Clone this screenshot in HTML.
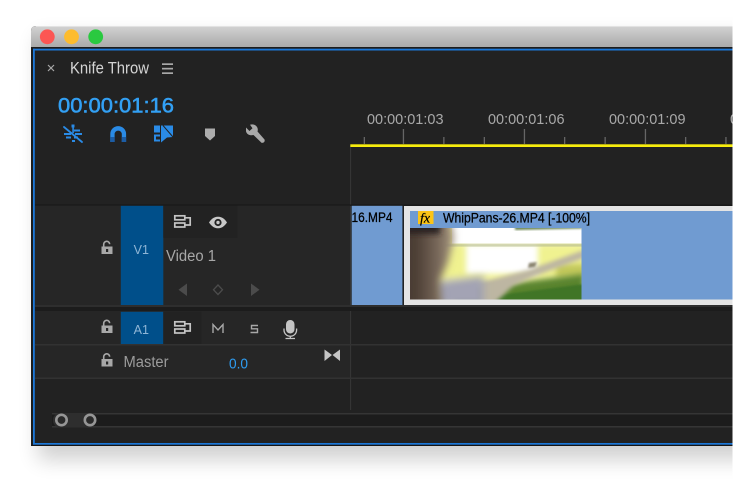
<!DOCTYPE html>
<html><head><meta charset="utf-8"><style>
html,body{margin:0;padding:0;width:755px;height:482px;overflow:hidden;background:#fff}
svg{display:block;position:absolute;left:0;top:0}
text{font-family:"Liberation Sans",sans-serif}
</style></head><body>
<svg width="755" height="482" viewBox="0 0 755 482" xmlns="http://www.w3.org/2000/svg">
<defs>
<linearGradient id="tb" x1="0" y1="0" x2="0" y2="1"><stop offset="0" stop-color="#d2d2d2"/><stop offset="1" stop-color="#a8a8a8"/></linearGradient>
<filter id="sh" x="-15%" y="-15%" width="130%" height="135%"><feGaussianBlur stdDeviation="10"/></filter>
<filter id="b1" x="-20%" y="-20%" width="140%" height="140%"><feGaussianBlur stdDeviation="1.100"/></filter>
<filter id="b2" x="-20%" y="-20%" width="140%" height="140%"><feGaussianBlur stdDeviation="2"/></filter>
<filter id="b3" x="-30%" y="-30%" width="160%" height="160%"><feGaussianBlur stdDeviation="3"/></filter>
<filter id="b5" x="-40%" y="-40%" width="180%" height="180%"><feGaussianBlur stdDeviation="4"/></filter>
<filter id="soft" x="0" y="0" width="100%" height="100%"><feGaussianBlur stdDeviation="0.38"/></filter>
<clipPath id="th"><rect x="410" y="228" width="171.500" height="71.500"/></clipPath>
<clipPath id="win"><rect x="0" y="0" width="732.500" height="482"/></clipPath>
<linearGradient id="face" x1="0" y1="0" x2="1" y2="0"><stop offset="0" stop-color="#3a2f27"/><stop offset=".5" stop-color="#4e4036"/><stop offset=".8" stop-color="#7a6a5c"/><stop offset="1" stop-color="#a89880"/></linearGradient>
<g id="tog" fill="none" stroke="#c4c4c4" stroke-width="1.700"><rect x="0.800" y="0.800" width="10" height="4"/><rect x="0.800" y="8" width="10" height="4"/><path d="M10.800 2.800H16.200V10H10.800"/></g>
<g id="lk"><path d="M2.200 6V3.500a3 3 0 0 1 6-.3" fill="none" stroke="#a8a8a8" stroke-width="1.600"/><path d="M0 5.500H11V13H0Z" fill="#a8a8a8"/><rect x="4.500" y="8" width="2.200" height="3" fill="#262626"/></g>
</defs>
<g clip-path="url(#win)">
<rect x="38" y="36" width="720" height="424" fill="#000" opacity=".18" filter="url(#sh)"/>
</g>
<rect x="733" y="0" width="22" height="482" fill="#fff"/>
<g filter="url(#soft)">
<path d="M31 446V31q0-5 5-5H734V446z" fill="#222"/>
<path d="M31 48V31q0-5 5-5H734V48z" fill="url(#tb)"/>
<rect x="36" y="26" width="698" height="1" fill="#e2e2e2"/>
<rect x="31" y="47" width="703" height="1.500" fill="#1c1c1c"/>
<circle cx="47.300" cy="36.800" r="7.400" fill="#fc5753"/>
<circle cx="71.500" cy="36.800" r="7.400" fill="#fdbc2e"/>
<circle cx="95.700" cy="36.800" r="7.400" fill="#29c940"/>

<rect x="31" y="48" width="2" height="398" fill="#1d1d1d"/>
<rect x="33" y="48.700" width="701" height="1.800" fill="#1f78d8"/>
<rect x="33" y="48.700" width="1.800" height="396" fill="#1f78d8"/>
<rect x="33" y="443" width="701" height="1.800" fill="#1f78d8"/>
<rect x="32" y="444.800" width="702" height="1.200" fill="#181818"/>

<!-- header -->
<g stroke="#a8a8a8" stroke-width="1.200"><path d="M48 65L54 71M54 65L48 71"/></g>
<text x="70" y="73.500" font-size="16.500" fill="#d4d4d4" textLength="79" lengthAdjust="spacingAndGlyphs">Knife Throw</text>
<g fill="#a8a8a8"><rect x="162" y="63.300" width="11" height="1.700"/><rect x="162" y="67.800" width="11" height="1.700"/><rect x="162" y="72.300" width="11" height="1.700"/></g>
<text x="58" y="112.500" font-size="21.500" fill="#33a0f4" stroke="#33a0f4" stroke-width=".55" textLength="116" lengthAdjust="spacingAndGlyphs">00:00:01:16</text>

<!-- toolbar icons -->
<g fill="#2b8be6" stroke="none">
<g stroke="#2b8be6" stroke-width="1.800" fill="none" stroke-linecap="round"><path d="M64 127L82 142"/></g>
<rect x="71.500" y="124.500" width="3" height="3"/><rect x="72.300" y="127" width="1.600" height="6"/>
<rect x="74" y="129.500" width="6" height="2"/><rect x="64" y="133" width="7" height="2"/><rect x="75" y="133" width="7" height="2"/>
<rect x="66" y="136.500" width="5" height="2"/><rect x="74" y="136.500" width="4" height="2"/><rect x="72" y="140" width="3" height="2"/>
<path d="M110.300 142V134a7.900 7.900 0 0 1 15.800 0V142H121.800V134.200a3.600 3.600 0 0 0-7.200 0V142Z"/>
<path d="M110.300 137H114.600V142H110.300ZM121.800 137H126.100V142H121.800Z" fill="#1a5da6"/>
<rect x="154" y="125.500" width="6" height="7"/><path d="M154 134.500h6v2h-4v3h4v2h-6z"/>
<path d="M161 125.500L173 125.500V137L167 137.500L161 142.500Z"/>
<path d="M163 125.500L173 137" stroke="#222" stroke-width="1" fill="none"/>
</g>
<path d="M205 128.500H215V136L210 140.500L205 136Z" fill="#adadad"/>
<path d="M246 127.500L249.500 131L252.500 128.300L250 124.800C253 123.700 256.300 125 257.500 128C258 129.500 257.800 130.500 257.500 131.500L264.500 139.500C265.300 141.700 263.500 143.300 261.500 142.800L253.500 135C250 135.800 246.800 134.500 246 131.200Z" fill="#a9a9a9"/>

<!-- ruler -->
<g font-size="15" fill="#a8a8a8">
<text x="367" y="124" textLength="76.500" lengthAdjust="spacingAndGlyphs">00:00:01:03</text>
<text x="488" y="124" textLength="76.500" lengthAdjust="spacingAndGlyphs">00:00:01:06</text>
<text x="609" y="124" textLength="76.500" lengthAdjust="spacingAndGlyphs">00:00:01:09</text>
<text x="730" y="124" textLength="76.500" lengthAdjust="spacingAndGlyphs">00:00:01:12</text>
</g>
<g fill="#666">
<rect x="402.800" y="129" width="1.300" height="15"/><rect x="523.800" y="129" width="1.300" height="15"/><rect x="644.800" y="129" width="1.300" height="15"/>
<rect x="363.700" y="137" width="1.300" height="7"/><rect x="443.200" y="137" width="1.300" height="7"/><rect x="483.700" y="137" width="1.300" height="7"/><rect x="564" y="137" width="1.300" height="7"/><rect x="604.500" y="137" width="1.300" height="7"/><rect x="685" y="137" width="1.300" height="7"/><rect x="725.300" y="137" width="1.300" height="7"/>
</g>
<rect x="350.300" y="144.300" width="384" height="2.700" fill="#f6ec10"/>

<!-- dividers -->
<rect x="350" y="147" width="1.200" height="263" fill="#343434"/>
<rect x="35" y="204.500" width="699" height="1.300" fill="#191919"/>
<rect x="35" y="205.500" width="315" height="100" fill="#262626"/>
<rect x="35" y="305" width="699" height="2" fill="#2e2e2e"/>
<rect x="35" y="307" width="699" height="4" fill="#1e1e1e"/>
<rect x="35" y="311" width="315" height="33" fill="#262626"/>
<rect x="35" y="344" width="699" height="1.500" fill="#323232"/>
<rect x="35" y="345.500" width="315" height="32" fill="#262626"/>
<rect x="35" y="377.500" width="699" height="1.500" fill="#323232"/>

<!-- V1 -->
<rect x="120.800" y="205.800" width="42.500" height="99.200" fill="#04508a"/>
<text x="141.300" y="254" font-size="12.500" fill="#8fb6d6" text-anchor="middle">V1</text>
<rect x="163.300" y="205.800" width="74" height="32" fill="#222"/>
<text x="166" y="261" font-size="15.500" fill="#a8a8a8" textLength="50" lengthAdjust="spacingAndGlyphs">Video 1</text>
<path d="M187 283.500V296L178.500 289.700Z" fill="#4c4c4c"/>
<path d="M251 283.500V296L259.500 289.700Z" fill="#4c4c4c"/>
<path d="M218 285L222.500 289.700L218 294.500L213.500 289.700Z" fill="none" stroke="#4c4c4c" stroke-width="1.300"/>

<!-- A1 -->
<rect x="120.800" y="311.800" width="42.500" height="32.200" fill="#04508a"/>
<text x="141.300" y="334" font-size="12.500" fill="#8fb6d6" text-anchor="middle">A1</text>
<rect x="163.300" y="311.800" width="38" height="32.200" fill="#212121"/>

<!-- track icons -->
<use href="#tog" x="174" y="215"/>
<use href="#tog" x="174" y="321"/>
<path d="M209 222.500C212 218 215 216.800 218 216.800C221 216.800 224 218 227 222.500C224 227 221 228.300 218 228.300C215 228.300 212 227 209 222.500Z" fill="#c8c8c8"/>
<circle cx="218" cy="222.500" r="3.600" fill="#222"/><circle cx="218" cy="222.500" r="1.700" fill="#c8c8c8"/>
<use href="#lk" x="101.500" y="241"/>
<use href="#lk" x="101.500" y="320"/>
<use href="#lk" x="101.500" y="353.500"/>
<path d="M213 333V324.500L218 330L223 324.500V333" fill="none" stroke="#a8a8a8" stroke-width="1.400"/>
<path d="M258 325.500H251.500V328.800H257.500V332.500H250.500" fill="none" stroke="#a8a8a8" stroke-width="1.400"/>
<rect x="286" y="320" width="8.500" height="13.500" rx="4.200" fill="#c4c4c4"/>
<path d="M284 328.500V330a6.300 6.300 0 0 0 12.600 0V328.500M290.300 336V338.500M285.500 338.500H295" fill="none" stroke="#c4c4c4" stroke-width="1.300"/>
<text x="123.500" y="367" font-size="15.500" fill="#9c9c9c" textLength="45" lengthAdjust="spacingAndGlyphs">Master</text>
<text x="229" y="368.500" font-size="15" fill="#2e9cf0" textLength="19" lengthAdjust="spacingAndGlyphs">0.0</text>
<path d="M324.500 349.500L332 355L324.500 361ZM340 349.500L332.500 355L340 361Z" fill="#c4c4c4"/>

<!-- clips -->
<rect x="351.700" y="205.800" width="50.700" height="99.200" fill="#6f9bd1"/>
<text x="351.500" y="222" font-size="13.500" fill="#000" stroke="#000" stroke-width=".25" textLength="41" lengthAdjust="spacingAndGlyphs">16.MP4</text>
<rect x="404" y="206" width="330" height="99" fill="#e4e4e4"/>
<rect x="410" y="211" width="324" height="88.500" fill="#6f9bd1"/>
<rect x="418" y="211" width="15.500" height="13" fill="#fcc419"/>
<text x="420" y="222.500" font-size="14" font-style="italic" fill="#000" stroke="#000" stroke-width=".2" style="font-family:'Liberation Serif',serif">fx</text>
<text x="443" y="222.500" font-size="13.500" fill="#000" stroke="#000" stroke-width=".25" textLength="147" lengthAdjust="spacingAndGlyphs">WhipPans-26.MP4 [-100%]</text>

<!-- thumbnail -->
<g clip-path="url(#th)">
<rect x="410" y="228" width="172" height="72" fill="#f4f4a8"/>
<rect x="438" y="246" width="146" height="32" fill="#f0f290" filter="url(#b3)"/>
<rect x="466" y="244" width="72" height="30" fill="#ffffff" filter="url(#b3)"/>
<rect x="556" y="264" width="30" height="14" fill="#c2c85c" filter="url(#b3)"/>
<path d="M455 290L584 274V306H455Z" fill="#5a842e" filter="url(#b3)"/>
<path d="M490 296L584 284V306H490Z" fill="#3f7526" filter="url(#b1)"/>
<rect x="452" y="226" width="132" height="17.500" fill="#fff"/>
<path d="M515 230L582 228.500V225H515Z" fill="#6a8450" filter="url(#b1)"/>
<rect x="445" y="244.200" width="139" height="2" fill="#b3ba90" filter="url(#b1)"/>
<path d="M478 304V283L528 270L584 250L584 258L535 276L513 286L494 304Z" fill="#bdb6a2" filter="url(#b2)"/>
<path d="M529 263L537 262L535 267L528 268Z" fill="#8a8470" filter="url(#b1)"/>
<path d="M436 282L484 276V306H436Z" fill="#a3a3b4" filter="url(#b5)"/>
<path d="M380 205H448L454 238L448 262L440 280L442 310H380Z" fill="url(#face)" filter="url(#b5)"/>
<rect x="400" y="220" width="40" height="14" fill="#2b2420" filter="url(#b3)"/>
</g>

<!-- scrollbar -->
<rect x="52" y="413" width="682" height="1.500" fill="#343434"/>
<rect x="52" y="426" width="682" height="1.500" fill="#343434"/>
<rect x="52" y="414.500" width="682" height="11.500" fill="#1c1c1c"/>
<rect x="53" y="413" width="38" height="14.500" rx="7" fill="#2e2e2e"/>
<circle cx="61.500" cy="420" r="5.200" fill="#2a2a2a" stroke="#969696" stroke-width="2.600"/>
<circle cx="90" cy="420" r="5.200" fill="#2a2a2a" stroke="#969696" stroke-width="2.600"/>
</g>
<rect x="732.500" y="0" width="23" height="482" fill="#fff"/>
</svg>
</body></html>
